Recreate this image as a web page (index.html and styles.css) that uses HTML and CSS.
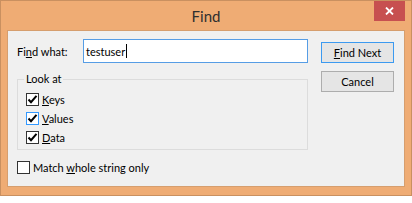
FILE: index.html
```html
<!DOCTYPE html>
<html lang="en">
<head>
    <meta charset="UTF-8">
    <meta name="viewport" content="width=device-width, initial-scale=1.0">
    <title>Find</title>
    <link rel="stylesheet" href="styles.css">
</head>
<body>

    <!-- Ventana: Find -->
    <div class="ventana">
        <div class="barra-titulo">
            <span></span>
            <span class="titulo">Find</span>
            <span class="cerrar">
                <svg width="9" height="8" viewBox="0 0 9 8">
                    <path d="M1 0.5 L8 7.5 M8 0.5 L1 7.5" stroke="#fff" stroke-width="1.8" fill="none"/>
                </svg>
            </span>
        </div>

        <div class="cliente">
            <div class="formulario">
                <div class="fila-buscar">
                    <span class="etiqueta">Fi<u>n</u>d what:</span>
                    <div class="caja-texto">testuser<span class="cursor"></span></div>
                </div>

                <fieldset class="grupo">
                    <legend>Look at</legend>
                    <div class="opcion">
                        <span class="casilla"><svg width="11" height="11" viewBox="0 0 11 11"><path d="M1.5 5.5 L4 8.2 L9.5 1.8" stroke="#000" stroke-width="2" fill="none"/></svg></span>
                        <span><u>K</u>eys</span>
                    </div>
                    <div class="opcion">
                        <span class="casilla foco"><svg width="11" height="11" viewBox="0 0 11 11"><path d="M1.5 5.5 L4 8.2 L9.5 1.8" stroke="#000" stroke-width="2" fill="none"/></svg></span>
                        <span><u>V</u>alues</span>
                    </div>
                    <div class="opcion">
                        <span class="casilla"><svg width="11" height="11" viewBox="0 0 11 11"><path d="M1.5 5.5 L4 8.2 L9.5 1.8" stroke="#000" stroke-width="2" fill="none"/></svg></span>
                        <span><u>D</u>ata</span>
                    </div>
                </fieldset>

                <div class="opcion coincidir">
                    <span class="casilla"></span>
                    <span>Match <u>w</u>hole string only</span>
                </div>
            </div>

            <div class="botones">
                <button class="predeterminado"><u>F</u>ind Next</button>
                <button>Cancel</button>
            </div>
        </div>
    </div>

</body>
</html>
```

FILE: styles.css
```css
body {
    margin: 0;
    background-color: #fff;
    font-family: "Segoe UI", Lato, "Liberation Sans", sans-serif;
    font-size: 11px;
    color: #000;
}
.ventana {
    width: 412px;
    height: 196px;
    box-sizing: border-box;
    background-color: #efac74;
    border: 1px solid #c99060;
}
.barra-titulo {
    height: 29px;
    display: grid;
    grid-template-columns: 1fr auto 1fr;
}
.titulo {
    font-size: 15px;
    color: #2f2f2f;
    line-height: 30px;
}
.cerrar {
    justify-self: end;
    align-self: start;
    width: 31px;
    height: 20px;
    margin-right: 6px;
    background-color: #c75050;
    display: flex;
    align-items: center;
    justify-content: center;
}
.cliente {
    margin: 0 6px;
    height: 157px;
    box-sizing: border-box;
    background-color: #f0f0f0;
    border: 1px solid #d69e6e;
    padding: 8px 0 0 9px;
    display: flex;
    gap: 13px;
}
.formulario {
    width: 291px;
}
.fila-buscar {
    display: flex;
    align-items: center;
    height: 24px;
}
.etiqueta {
    width: 66px;
}
.caja-texto {
    width: 225px;
    height: 24px;
    box-sizing: border-box;
    background-color: #fff;
    border: 1px solid #569de5;
    padding-left: 2px;
    display: flex;
    align-items: center;
}
.cursor {
    display: inline-block;
    width: 1px;
    height: 14px;
    background-color: #000;
    margin-left: 1px;
}
.grupo {
    margin: 9px 0 0 0;
    padding: 4px 0 2px 8px;
    border: 1px solid #dcdcdc;
}
.grupo legend {
    padding: 0 2px;
    margin-left: -2px;
    line-height: 14px;
}
.opcion {
    display: flex;
    align-items: center;
    gap: 3px;
    height: 19px;
}
.coincidir {
    margin-top: 8px;
}
.casilla {
    width: 13px;
    height: 13px;
    box-sizing: border-box;
    background-color: #fff;
    border: 1px solid #333;
    display: flex;
    align-items: center;
    justify-content: center;
}
.casilla.foco {
    border-color: #3399ff;
}
.botones {
    display: flex;
    flex-direction: column;
    gap: 8px;
    padding-top: 3px;
}
button {
    width: 73px;
    height: 21px;
    padding: 0;
    font-family: inherit;
    font-size: 11px;
    color: #000;
    background-color: #e5e5e5;
    border: 1px solid #adadad;
}
button.predeterminado {
    border-color: #3c9af0;
}
```
